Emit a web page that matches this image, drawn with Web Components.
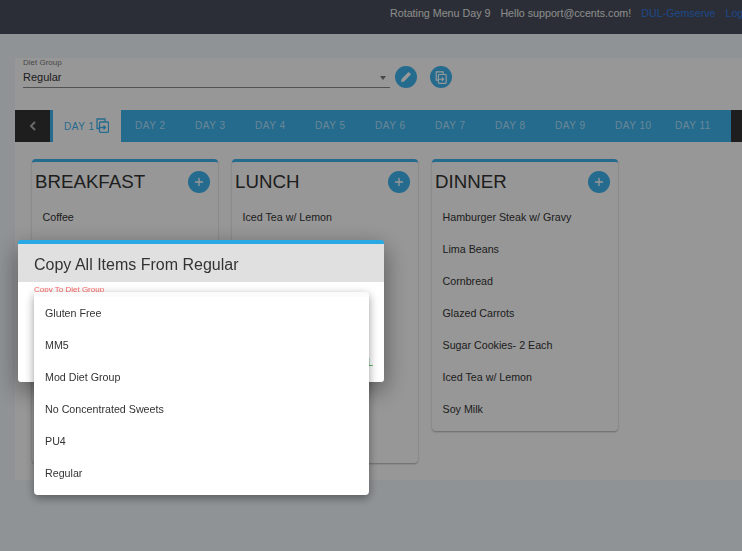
<!DOCTYPE html>
<html>
<head>
<meta charset="utf-8">
<title>Rotating Menu</title>
<style>
  html, body { margin: 0; height: 551px; overflow: hidden; }
  body { background: #eef5fa; font-family: "Liberation Sans", Arial, sans-serif; color: #333; }
</style>
</head>
<body>
<app-topbar>
  <span>Rotating Menu Day 9</span>
  <span>Hello support@ccents.com!</span>
  <a>DUL-Gemserve</a>
  <a>Logout</a>
</app-topbar>
<menu-panel>
  <diet-bar label="Diet Group" value="Regular"></diet-bar>
  <day-tabs active="1" count="11"></day-tabs>
  <meal-board>
    <meal-card title="BREAKFAST" style="min-height:304px">
      <meal-item>Coffee</meal-item>
    </meal-card>
    <meal-card title="LUNCH" style="min-height:304px">
      <meal-item>Iced Tea w/ Lemon</meal-item>
    </meal-card>
    <meal-card title="DINNER">
      <meal-item>Hamburger Steak w/ Gravy</meal-item>
      <meal-item>Lima Beans</meal-item>
      <meal-item>Cornbread</meal-item>
      <meal-item>Glazed Carrots</meal-item>
      <meal-item>Sugar Cookies- 2 Each</meal-item>
      <meal-item>Iced Tea w/ Lemon</meal-item>
      <meal-item>Soy Milk</meal-item>
    </meal-card>
  </meal-board>
</menu-panel>
<copy-dialog heading="Copy All Items From Regular" label="Copy To Diet Group">
  <menu-option>Gluten Free</menu-option>
  <menu-option>MM5</menu-option>
  <menu-option>Mod Diet Group</menu-option>
  <menu-option>No Concentrated Sweets</menu-option>
  <menu-option>PU4</menu-option>
  <menu-option>Regular</menu-option>
</copy-dialog>

<script>
const COPY_ICON = `
  <svg viewBox="0 0 13 15" fill="none" stroke="currentColor" stroke-width="1.3">
    <path d="M3 10.5H1V1h8v2.5"/>
    <rect x="3.5" y="4" width="9" height="10.3" rx="1"/>
    <path d="M4 9.5h5.5M7.5 7.5l2 2-2 2"/>
  </svg>`;

class AppTopbar extends HTMLElement {
  constructor() {
    super();
    this.attachShadow({ mode: 'open' });
    this.shadowRoot.innerHTML = `
      <style>
        :host {
          display: flex;
          align-items: flex-start;
          gap: 10px;
          height: 34px;
          box-sizing: border-box;
          padding: 6px 0 0 390px;
          background: #494e5a;
          color: #e8e8e8;
          font-size: 10.7px;
          line-height: 14px;
          white-space: nowrap;
          overflow: hidden;
        }
        ::slotted(a) { color: #3078e0; }
      </style>
      <slot></slot>
    `;
  }
}

class MenuPanel extends HTMLElement {
  constructor() {
    super();
    this.attachShadow({ mode: 'open' });
    this.shadowRoot.innerHTML = `
      <style>
        :host {
          display: block;
          box-sizing: border-box;
          height: 422px;
          margin: 24px 0 0 15px;
          background: #fcfcfc;
        }
      </style>
      <slot></slot>
    `;
  }
}

class DietBar extends HTMLElement {
  constructor() {
    super();
    this.attachShadow({ mode: 'open' });
    this.shadowRoot.innerHTML = `
      <style>
        :host { display: flex; align-items: flex-start; height: 52px; padding-left: 8px; }
        .field { width: 367px; height: 30px; box-sizing: border-box; border-bottom: 1px solid #888; position: relative; }
        .label { font-size: 8px; line-height: 10px; color: #777; }
        .value { font-size: 11px; line-height: 14px; margin-top: 2px; color: #333; }
        .caret { position: absolute; right: 4px; top: 18px; width: 0; height: 0;
          border: 3.5px solid transparent; border-top: 4px solid #777; border-bottom: 0; }
        .btn { width: 22px; height: 22px; border-radius: 50%; background: #3eb2ed; color: #fff;
          display: flex; align-items: center; justify-content: center; margin-top: 8px; }
        .edit { margin-left: 5px; }
        .copy { margin-left: 13px; }
        svg { display: block; }
        .copy svg { width: 12px; height: 13px; }
      </style>
      <div class="field">
        <div class="label">${this.getAttribute('label')}</div>
        <div class="value">${this.getAttribute('value')}</div>
        <div class="caret"></div>
      </div>
      <div class="btn edit">
        <svg width="12" height="12" viewBox="0 0 12 12"><path d="M1 11l.6-3L8 1.6a1 1 0 0 1 1.4 0l1 1a1 1 0 0 1 0 1.4L4 10.4z" fill="currentColor"/></svg>
      </div>
      <div class="btn copy">${COPY_ICON}</div>
    `;
  }
}

class DayTabs extends HTMLElement {
  constructor() {
    super();
    this.attachShadow({ mode: 'open' });
    const count = Number(this.getAttribute('count'));
    let tabs = '';
    for (let i = 2; i <= count; i++) {
      tabs += `<div class="tab">DAY ${i}</div>`;
    }
    this.shadowRoot.innerHTML = `
      <style>
        :host {
          display: flex;
          height: 32px;
          background: #3eb2ed;
          font-size: 10px;
          letter-spacing: 0.5px;
          overflow: hidden;
        }
        .back { flex: none; width: 35px; background: #323232; color: #b0b0b0; display: flex; align-items: center; justify-content: center; }
        .sliver { flex: none; width: 3px; height: 31px; }
        .active { flex: none; width: 68px; box-sizing: border-box; padding-left: 11px; gap: 2px; background: #fcfcfc; color: #3eb2ed;
          display: flex; align-items: center; }
        .active svg { width: 13px; height: 15px; margin-top: -1px; flex: none; }
        .tab { flex: none; width: 60px; box-sizing: border-box; padding-left: 14px; line-height: 32px; color: #b2e0f8; white-space: nowrap; }
        .end { flex: none; width: 11px; margin-left: auto; background: #323232; }
      </style>
      <div class="back"><svg width="8" height="10" viewBox="0 0 8 10" fill="none" stroke="currentColor" stroke-width="2"><path d="M6 1L2 5l4 4"/></svg></div>
      <div class="sliver"></div>
      <div class="active">DAY ${this.getAttribute('active')}${COPY_ICON}</div>
      ${tabs}
      <div class="end"></div>
    `;
  }
}

class MealBoard extends HTMLElement {
  constructor() {
    super();
    this.attachShadow({ mode: 'open' });
    this.shadowRoot.innerHTML = `
      <style>
        :host { display: flex; align-items: flex-start; gap: 14px; padding: 17px 0 0 17px; }
      </style>
      <slot></slot>
    `;
  }
}

class MealCard extends HTMLElement {
  constructor() {
    super();
    this.attachShadow({ mode: 'open' });
    this.shadowRoot.innerHTML = `
      <style>
        :host {
          display: block;
          width: 186px;
          box-sizing: border-box;
          padding-bottom: 6px;
          border-top: 3px solid #3eb2ed;
          border-radius: 4px;
          background: #fcfcfc;
          box-shadow: 0 1px 2px rgba(0,0,0,.3);
        }
        .head { display: flex; align-items: center; justify-content: space-between; height: 39px; padding: 0 8px 0 3px; }
        h2 { margin: 0; font-size: 18.7px; font-weight: 400; color: #333; }
        .add { width: 22px; height: 22px; border-radius: 50%; background: #3eb2ed; color: #fff;
          display: flex; align-items: center; justify-content: center; }
      </style>
      <div class="head">
        <h2>${this.getAttribute('title')}</h2>
        <div class="add"><svg width="10" height="10" viewBox="0 0 10 10" stroke="currentColor" stroke-width="1.3"><path d="M5 1v8M1 5h8"/></svg></div>
      </div>
      <slot></slot>
    `;
  }
}

class MealItem extends HTMLElement {
  constructor() {
    super();
    this.attachShadow({ mode: 'open' });
    this.shadowRoot.innerHTML = `
      <style>
        :host { display: block; height: 32px; line-height: 32px; padding-left: 10.5px; font-size: 10.7px; color: #333; white-space: nowrap; }
      </style>
      <slot></slot>
    `;
  }
}

// scrim, dialog and open select menu lie over the page
class CopyDialog extends HTMLElement {
  constructor() {
    super();
    this.attachShadow({ mode: 'open' });
    this.shadowRoot.innerHTML = `
      <style>
        :host { position: fixed; inset: 0; display: block; background: rgba(0,0,0,.4); }
        .dialog {
          position: absolute; left: 18px; top: 240px; width: 366px; height: 142px;
          box-sizing: border-box;
          background: #fff;
          border-top: 4px solid #29a8e4;
          border-radius: 3px;
          box-shadow: 0 8px 24px rgba(0,0,0,.45);
        }
        .header { height: 38px; padding-left: 16px; background: #e0e0e0; color: #333; font-size: 16px; line-height: 42px; }
        .label { padding: 3px 0 0 16px; font-size: 8px; line-height: 10px; color: #f66; }
        .cancel { position: absolute; right: 11px; bottom: 13px; font-size: 10px; line-height: 12px; color: #2e9e4a; }
        .menu {
          position: absolute; left: 34px; top: 292px; width: 335px; height: 203px;
          box-sizing: border-box;
          padding: 5px 0 6px;
          background: linear-gradient(#fbfbfb 5px, #fff 5px);
          border-radius: 4px;
          box-shadow: 0 3px 10px rgba(0,0,0,.4);
        }
      </style>
      <div class="dialog">
        <div class="header">${this.getAttribute('heading')}</div>
        <div class="label">${this.getAttribute('label')}</div>
        <div class="cancel">CANCEL</div>
      </div>
      <div class="menu"><slot></slot></div>
    `;
  }
}

class MenuOption extends HTMLElement {
  constructor() {
    super();
    this.attachShadow({ mode: 'open' });
    this.shadowRoot.innerHTML = `
      <style>
        :host { display: block; height: 32px; line-height: 32px; padding-left: 11px; font-size: 10.7px; color: #333; }
      </style>
      <slot></slot>
    `;
  }
}

customElements.define('app-topbar', AppTopbar);
customElements.define('menu-panel', MenuPanel);
customElements.define('diet-bar', DietBar);
customElements.define('day-tabs', DayTabs);
customElements.define('meal-board', MealBoard);
customElements.define('meal-card', MealCard);
customElements.define('meal-item', MealItem);
customElements.define('copy-dialog', CopyDialog);
customElements.define('menu-option', MenuOption);
</script>
</body>
</html>
